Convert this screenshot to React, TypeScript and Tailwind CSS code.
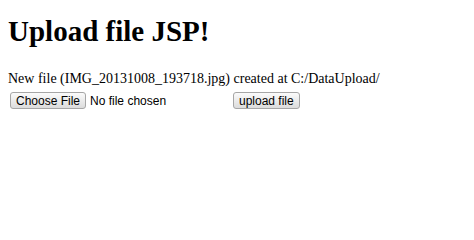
export default function App() {
  return (
    <div className="min-h-[215px] bg-white px-2 font-['Liberation_Serif',serif] text-black">
      <h1 className="pt-[15px] text-[29px] font-bold leading-[32px]">Upload file JSP!</h1>
      <div className="mt-[24px] text-[14px] leading-[16px]">
        New file (IMG_20131008_193718.jpg) created at C:/DataUpload/
      </div>
      <form className="mt-[5px] flex items-center">
        <div className="flex w-[223px] items-center">
          <button
            type="button"
            className="ml-[2px] h-[17px] rounded-[3px] border border-[#a6a6a6] bg-gradient-to-b from-[#fbfbfb] to-[#dcdcdc] px-[5px] font-['Liberation_Sans',Arial,sans-serif] text-[12px] leading-[14px] text-black"
          >
            Choose File
          </button>
          <span className="ml-[4px] font-['Liberation_Sans',Arial,sans-serif] text-[12px] leading-[14px]">
            No file chosen
          </span>
        </div>
        <button
          type="submit"
          className="ml-[2px] h-[17px] rounded-[3px] border border-[#a6a6a6] bg-gradient-to-b from-[#fbfbfb] to-[#dcdcdc] px-[5px] font-['Liberation_Sans',Arial,sans-serif] text-[12px] leading-[14px] text-black"
        >
          upload file
        </button>
      </form>
    </div>
  );
}
